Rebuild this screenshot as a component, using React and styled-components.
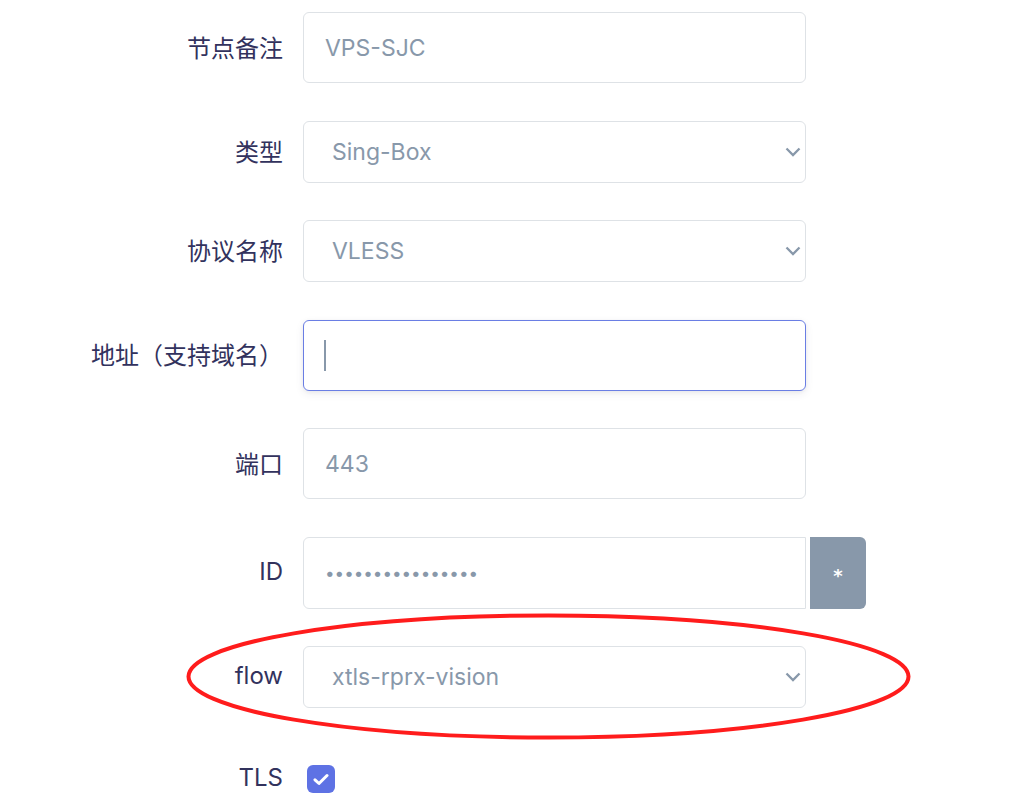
import React from 'react';
import styled, { createGlobalStyle } from 'styled-components';

const GlobalStyle = createGlobalStyle`
  html, body {
    margin: 0;
    padding: 0;
    background: #fff;
  }
  body {
    font-family: Inter, "Noto Sans", "Noto Sans CJK SC", sans-serif;
  }
`;

const Page = styled.div`
  position: relative;
  width: 1033px;
  height: 798px;
  overflow: hidden;
  padding-top: 12px;
  box-sizing: border-box;
`;

const Form = styled.form`
  display: flex;
  flex-direction: column;
  gap: 37.5px;
`;

const Row = styled.div`
  display: flex;
  align-items: center;
  min-height: ${(p) => p.$minHeight || 0}px;
`;

const Label = styled.label`
  width: 283px;
  padding-right: 20px;
  text-align: right;
  font-size: 24px;
  color: #32325d;
  font-family: Inter, "Noto Sans CJK SC", sans-serif;
  margin-top: -3px;
  flex-shrink: 0;
`;

const Input = styled.input`
  box-sizing: border-box;
  width: 503px;
  height: ${(p) => p.$height || 71}px;
  padding: 0 21px;
  font-size: 23px;
  font-family: Inter, "Noto Sans", sans-serif;
  color: #8898aa;
  border: 1px solid ${(p) => (p.$focused ? '#6a7ee4' : '#dee2e6')};
  border-radius: ${(p) => (p.$attached ? '6px 0 0 6px' : '6px')};
  box-shadow: ${(p) =>
    p.$focused ? '0 3px 9px rgba(50, 50, 93, 0.08), 0 1px 4px rgba(0,0,0,0.05)' : 'none'};
  outline: none;
  background: #fff;
  &::placeholder {
    color: #8898aa;
  }
`;

const Dots = styled(Input)`
  font-size: 17px;
  letter-spacing: 0;
  padding-left: 21px;
`;

const Field = styled.div`
  position: relative;
  display: flex;
`;

const Caret = styled.span`
  position: absolute;
  left: 21px;
  top: 20px;
  width: 2px;
  height: 31px;
  background: #8898aa;
`;

const Select = styled.select`
  box-sizing: border-box;
  width: 503px;
  height: 62px;
  padding: 0 40px 0 28px;
  font-size: 23px;
  font-family: Inter, "Noto Sans", sans-serif;
  color: #8898aa;
  border: 1px solid #dee2e6;
  border-radius: 6px;
  background: #fff;
  appearance: none;
  outline: none;
`;

const Chevron = styled.svg`
  position: absolute;
  right: 5px;
  top: 50%;
  margin-top: -5px;
  pointer-events: none;
`;

const AddonButton = styled.button`
  width: 56px;
  height: 72px;
  margin-left: 4px;
  border: none;
  border-radius: 0 6px 6px 0;
  background: #8898aa;
  color: #fff;
  font-size: 18px;
  font-weight: 700;
  font-family: "DejaVu Sans", sans-serif;
  padding: 6px 0 0;
`;

const CheckBox = styled.span`
  display: inline-flex;
  align-items: center;
  justify-content: center;
  width: 28px;
  height: 28px;
  margin-left: 4px;
  border-radius: 6px;
  background: #5e72e4;
`;

const Annotation = styled.svg`
  position: absolute;
  left: 0;
  top: 0;
  pointer-events: none;
`;

const SelectField = ({ value }) => (
  <Field>
    <Select defaultValue={value}>
      <option>{value}</option>
    </Select>
    <Chevron width="16" height="10" viewBox="0 0 16 10">
      <polyline
        points="1.5,1.5 8,8 14.5,1.5"
        fill="none"
        stroke="#8898aa"
        strokeWidth="2.3"
      />
    </Chevron>
  </Field>
);

const App = () => {
  return (
    <Page>
      <GlobalStyle />
      <Form onSubmit={(e) => e.preventDefault()}>
        <Row>
          <Label>节点备注</Label>
          <Input placeholder="VPS-SJC" />
        </Row>
        <Row>
          <Label>类型</Label>
          <SelectField value="Sing-Box" />
        </Row>
        <Row>
          <Label>协议名称</Label>
          <SelectField value="VLESS" />
        </Row>
        <Row>
          <Label>地址（支持域名）</Label>
          <Field>
            <Input $focused />
            <Caret />
          </Field>
        </Row>
        <Row>
          <Label>端口</Label>
          <Input placeholder="443" />
        </Row>
        <Row>
          <Label>ID</Label>
          <Field>
            <Dots $attached $height={72} readOnly value={'\u2022'.repeat(16)} />
            <AddonButton type="button">*</AddonButton>
          </Field>
        </Row>
        <Row>
          <Label>flow</Label>
          <SelectField value="xtls-rprx-vision" />
        </Row>
        <Row $minHeight={67}>
          <Label>TLS</Label>
          <CheckBox>
            <svg width="16" height="13" viewBox="0 0 16 13">
              <polyline
                points="2,6.8 6,10.5 14,2.5"
                fill="none"
                stroke="#fff"
                strokeWidth="3"
                strokeLinecap="round"
                strokeLinejoin="round"
              />
            </svg>
          </CheckBox>
        </Row>
      </Form>
      <Annotation width="1033" height="798">
        <ellipse cx="548.5" cy="676.5" rx="360" ry="61" fill="none" stroke="#ff1c1c" strokeWidth="4" />
      </Annotation>
    </Page>
  );
};

export default App;
